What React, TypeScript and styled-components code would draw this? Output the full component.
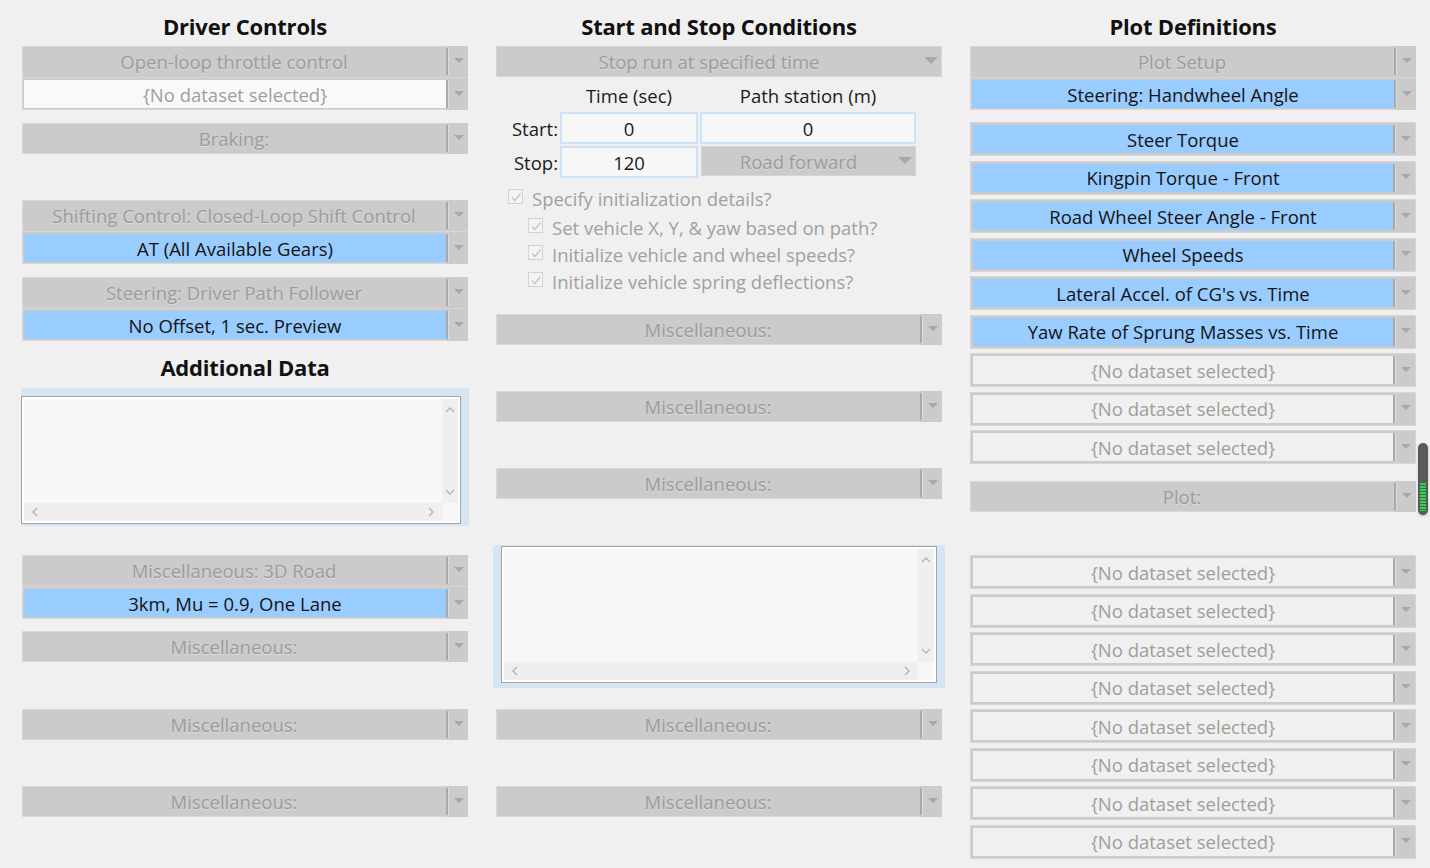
import React from "react";
import styled, { createGlobalStyle, css } from "styled-components";

type Tone = "grey" | "blue" | "white" | "field";

const GlobalStyle = createGlobalStyle`
  html, body {
    margin: 0;
    padding: 0;
    background: #f0f0f0;
  }
  body {
    font-family: "Open Sans", "Noto Sans", "Liberation Sans", sans-serif;
  }
`;

export default function App() {
  return (
    <Page>
      <GlobalStyle />
      <Column>
        <Title>Driver Controls</Title>
        <Group>
          <Combo tone="grey" text="Open-loop throttle control" />
          <Combo tone="white" text="{No dataset selected}" />
        </Group>
        <Group $top={13}>
          <Combo tone="grey" text="Braking:" />
        </Group>
        <Group $top={46}>
          <Combo tone="grey" text="Shifting Control: Closed-Loop Shift Control" />
          <Combo tone="blue" text="AT (All Available Gears)" />
        </Group>
        <Group $top={13}>
          <Combo tone="grey" text="Steering: Driver Path Follower" />
          <Combo tone="blue" text="No Offset, 1 sec. Preview" />
        </Group>
        <Title $tall>Additional Data</Title>
        <TextArea $h={138} $pad="8px 8px 2px 0" $side={-1} />
        <Group $top={29}>
          <Combo tone="grey" text="Miscellaneous: 3D Road" />
          <Combo tone="blue" text="3km, Mu = 0.9, One Lane" />
        </Group>
        <Group $top={12}>
          <Combo tone="grey" text="Miscellaneous:" />
        </Group>
        <Group $top={47}>
          <Combo tone="grey" text="Miscellaneous:" />
        </Group>
        <Group $top={46}>
          <Combo tone="grey" text="Miscellaneous:" />
        </Group>
      </Column>

      <Column>
        <Title>Start and Stop Conditions</Title>
        <PlainSelect>
          <span>Stop run at specified time</span>
          <Arrow $big />
        </PlainSelect>
        <TimeGrid>
          <span />
          <HeadLabel>Time (sec)</HeadLabel>
          <HeadLabel>Path station (m)</HeadLabel>
          <RowLabel>Start:</RowLabel>
          <Field>0</Field>
          <Field>0</Field>
          <RowLabel>Stop:</RowLabel>
          <Field>120</Field>
          <PlainSelect $inner>
            <span>Road forward</span>
            <Arrow $big />
          </PlainSelect>
        </TimeGrid>
        <Checks>
          <Check $indent={0}>
            <CheckMark />
            Specify initialization details?
          </Check>
          <Check $indent={20}>
            <CheckMark />
            Set vehicle X, Y, &amp; yaw based on path?
          </Check>
          <Check $indent={20}>
            <CheckMark />
            Initialize vehicle and wheel speeds?
          </Check>
          <Check $indent={20}>
            <CheckMark />
            Initialize vehicle spring deflections?
          </Check>
        </Checks>
        <Group $top={19}>
          <Combo tone="grey" text="Miscellaneous:" />
        </Group>
        <Group $top={46}>
          <Combo tone="grey" text="Miscellaneous:" />
        </Group>
        <Group $top={46}>
          <Combo tone="grey" text="Miscellaneous:" />
        </Group>
        <TextArea $h={143} $pad="1px 8px 5px 8px" $side={-3} $top={46} />
        <Group $top={21}>
          <Combo tone="grey" text="Miscellaneous:" />
        </Group>
        <Group $top={46}>
          <Combo tone="grey" text="Miscellaneous:" />
        </Group>
      </Column>

      <Column>
        <Title>Plot Definitions</Title>
        <Group>
          <Combo tone="grey" text="Plot Setup" />
          <Combo tone="blue" text="Steering: Handwheel Angle" />
        </Group>
        <PlotList $top={12}>
          {[
            "Steer Torque",
            "Kingpin Torque - Front",
            "Road Wheel Steer Angle - Front",
            "Wheel Speeds",
            "Lateral Accel. of CG's vs. Time",
            "Yaw Rate of Sprung Masses vs. Time",
          ].map((t) => (
            <PlotItem key={t} tone="blue" text={t} />
          ))}
          {[0, 1, 2].map((i) => (
            <PlotItem key={"e" + i} tone="field" text="{No dataset selected}" />
          ))}
        </PlotList>
        <Group $top={17}>
          <Combo tone="grey" text="Plot:" />
        </Group>
        <PlotList $top={43}>
          {[0, 1, 2, 3, 4, 5, 6, 7].map((i) => (
            <PlotItem key={i} tone="field" text="{No dataset selected}" />
          ))}
        </PlotList>
      </Column>

      <Meter>
        <MeterFill />
      </Meter>
    </Page>
  );
}

function Combo({ tone, text }: { tone: Tone; text: string }) {
  return (
    <ComboRow>
      <ComboMain $tone={tone}>{text}</ComboMain>
      <ArrowCell>
        <Arrow />
      </ArrowCell>
    </ComboRow>
  );
}

function PlotItem({ tone, text }: { tone: Tone; text: string }) {
  return (
    <PlotBox>
      <ComboMain $tone={tone}>{text}</ComboMain>
      <ArrowCell>
        <Arrow />
      </ArrowCell>
    </PlotBox>
  );
}

function TextArea(props: { $h: number; $pad: string; $side: number; $top?: number }) {
  return (
    <Frame {...props}>
      <Box>
        <BoxBody />
        <VScroll>
          <Chevron viewBox="0 0 10 6">
            <path d="M1 5 L5 1 L9 5" />
          </Chevron>
          <Chevron viewBox="0 0 10 6">
            <path d="M1 1 L5 5 L9 1" />
          </Chevron>
        </VScroll>
        <HScroll>
          <Chevron viewBox="0 0 6 10" $narrow>
            <path d="M5 1 L1 5 L5 9" />
          </Chevron>
          <Chevron viewBox="0 0 6 10" $narrow>
            <path d="M1 1 L5 5 L1 9" />
          </Chevron>
        </HScroll>
        <Corner />
      </Box>
    </Frame>
  );
}

function CheckMark() {
  return (
    <CheckBox>
      <svg width="12" height="12" viewBox="0 0 12 12">
        <path d="M2 6.5 L5 9.5 L10.5 2.5" fill="none" stroke="#c4c4c4" strokeWidth="1.4" />
      </svg>
    </CheckBox>
  );
}

const Page = styled.div`
  position: relative;
  display: grid;
  grid-template-columns: repeat(3, 446px);
  column-gap: 28px;
  padding: 0 0 0 22px;
  width: 1430px;
  height: 868px;
  box-sizing: border-box;
  overflow: hidden;
  font-size: 18.5px;
`;

const Column = styled.div`
  display: flex;
  flex-direction: column;
`;

const Title = styled.div<{ $tall?: boolean }>`
  height: ${(p) => (p.$tall ? 47 : 46)}px;
  box-sizing: border-box;
  padding-top: 12px;
  line-height: 28px;
  text-align: center;
  font-weight: 700;
  font-size: 22px;
  color: #111;
  letter-spacing: -0.2px;
`;

const Group = styled.div<{ $top?: number }>`
  margin-top: ${(p) => p.$top ?? 0}px;
  display: flex;
  flex-direction: column;
  background: #cbcbcb;
  outline: 1px solid #d8d8d8;
  outline-offset: -1px;
`;

const toneStyles: Record<Tone, ReturnType<typeof css>> = {
  grey: css`
    background: #cbcbcb;
    color: #9b9b9b;
    text-shadow: 0 1px 0 rgba(255, 255, 255, 0.35);
  `,
  blue: css`
    background: #99ccff;
    color: #141414;
    margin: 2px 0 2px 2px;
  `,
  white: css`
    background: #f9f9f9;
    color: #a39d97;
    margin: 2px 0 2px 2px;
  `,
  field: css`
    background: #f0f0f0;
    color: #a39d97;
    margin: 2px 0 2px 2px;
  `,
};

const ComboRow = styled.div`
  display: flex;
  height: 31px;
  box-sizing: border-box;
  & + & {
    height: 33px;
    border-top: 1px solid #d6d6d6;
  }
`;

const ComboMain = styled.div<{ $tone: Tone }>`
  flex: 1;
  display: flex;
  align-items: center;
  justify-content: center;
  white-space: nowrap;
  overflow: hidden;
  ${(p) => toneStyles[p.$tone]}
`;

const ArrowCell = styled.div`
  width: 22px;
  display: flex;
  align-items: center;
  justify-content: center;
  position: relative;
  background: #cbcbcb;
  &::before {
    content: "";
    position: absolute;
    left: 0;
    top: 2px;
    bottom: 2px;
    width: 2px;
    background: #a9a9a9;
    border-right: 1px solid #dcdcdc;
  }
`;

const Arrow = styled.span<{ $big?: boolean }>`
  width: 0;
  height: 0;
  border-left: ${(p) => (p.$big ? 7 : 5)}px solid transparent;
  border-right: ${(p) => (p.$big ? 7 : 5)}px solid transparent;
  border-top: ${(p) => (p.$big ? 7 : 5)}px solid #a8a8a8;
  margin-left: 3px;
  margin-top: -2px;
`;

const PlainSelect = styled.div<{ $inner?: boolean }>`
  position: relative;
  height: ${(p) => (p.$inner ? 30 : 31)}px;
  box-sizing: border-box;
  display: flex;
  align-items: center;
  justify-content: center;
  padding-right: 20px;
  background: #cbcbcb;
  border: 1px solid #d6d6d6;
  color: #9b9b9b;
  text-shadow: 0 1px 0 rgba(255, 255, 255, 0.35);
  margin-left: ${(p) => (p.$inner ? 1 : 0)}px;
  & > ${Arrow} {
    position: absolute;
    right: 3px;
    top: 12px;
  }
`;

const TimeGrid = styled.div`
  margin-top: 4px;
  display: grid;
  grid-template-columns: 62px 138px 216px;
  grid-template-rows: 29px 32px 32px;
  row-gap: 2px;
  column-gap: 2px;
  color: #1a1a1a;
`;

const HeadLabel = styled.div`
  display: flex;
  align-items: center;
  justify-content: center;
`;

const RowLabel = styled.div`
  display: flex;
  align-items: center;
  justify-content: flex-end;
`;

const Field = styled.div`
  display: flex;
  align-items: center;
  justify-content: center;
  background: #f7f7f7;
  border: 2px solid #cfe2f5;
  box-sizing: border-box;
`;

const Checks = styled.div`
  margin-top: 7px;
  display: flex;
  flex-direction: column;
  color: #a0a0a0;
`;

const Check = styled.div<{ $indent: number }>`
  display: flex;
  align-items: center;
  gap: 9px;
  height: 27px;
  padding-left: ${(p) => 12 + p.$indent}px;
  &:first-child {
    margin-bottom: 2px;
  }
`;

const CheckBox = styled.span`
  width: 13px;
  height: 13px;
  border: 1px solid #d2d2d2;
  background: #f4f4f4;
  display: flex;
  align-items: center;
  justify-content: center;
  margin-top: -4px;
`;

const Frame = styled.div<{ $h: number; $pad: string; $side: number; $top?: number }>`
  margin-top: ${(p) => p.$top ?? 0}px;
  margin-left: ${(p) => p.$side}px;
  margin-right: ${(p) => p.$side}px;
  height: ${(p) => p.$h}px;
  box-sizing: border-box;
  padding: ${(p) => p.$pad};
  background: #d6e5f4;
  display: flex;
`;

const Box = styled.div`
  flex: 1;
  border: 1px solid #a4a4a4;
  background: #fff;
  padding: 2px;
  display: grid;
  grid-template-columns: 1fr 16px;
  grid-template-rows: 1fr 18px;
`;

const BoxBody = styled.div`
  background: #f7f7f7;
`;

const VScroll = styled.div`
  background: #efefef;
  display: flex;
  flex-direction: column;
  justify-content: space-between;
  align-items: center;
  padding: 8px 0 8px;
`;

const HScroll = styled.div`
  background: #efefef;
  display: flex;
  justify-content: space-between;
  align-items: center;
  padding: 0 8px;
`;

const Corner = styled.div`
  background: #f7f7f7;
`;

const Chevron = styled.svg<{ $narrow?: boolean }>`
  width: ${(p) => (p.$narrow ? 6 : 10)}px;
  height: ${(p) => (p.$narrow ? 10 : 6)}px;
  fill: none;
  stroke: #b4b4b4;
  stroke-width: 1.4;
`;

const PlotList = styled.div<{ $top: number }>`
  margin-top: ${(p) => p.$top}px;
  display: flex;
  flex-direction: column;
  gap: 4.5px;
`;

const PlotBox = styled.div`
  display: flex;
  height: 34px;
  box-sizing: border-box;
  background: #cbcbcb;
  border: 1px solid #d6d6d6;
  & > ${ComboMain} {
    margin: 2px 0 2px 2px;
  }
`;

const Meter = styled.div`
  position: absolute;
  left: 1418px;
  top: 443px;
  width: 10px;
  height: 72px;
  border-radius: 5px;
  background: #5a5a5a;
  box-shadow: 0 1px 2px rgba(0, 0, 0, 0.25);
  padding: 40px 2px 4px;
  box-sizing: border-box;
`;

const MeterFill = styled.div`
  height: 100%;
  background: repeating-linear-gradient(#33d055 0 2px, #3e6a48 2px 3px);
`;
